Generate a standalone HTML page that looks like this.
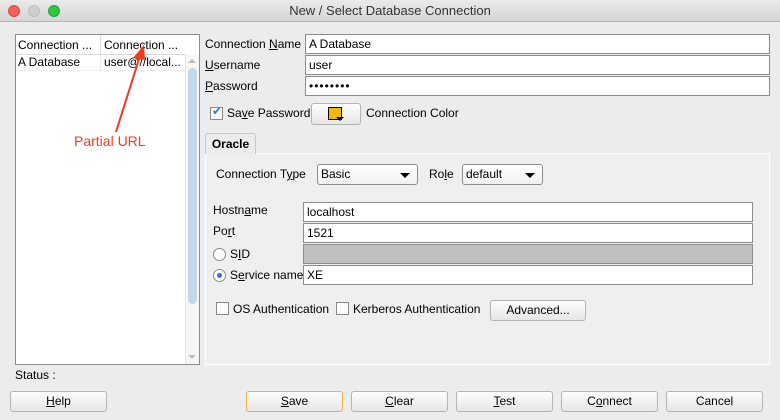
<!DOCTYPE html>
<html><head><style>
*{box-sizing:border-box;margin:0;padding:0}
body{width:780px;height:420px;background:#ececec;font-family:"Liberation Sans",sans-serif;font-size:12px;color:#000;position:relative;overflow:hidden}
.a{position:absolute}
.tb{left:0;top:0;width:780px;height:22px;background:linear-gradient(#ebebeb,#d5d5d5);border-bottom:1px solid #b5b5b5;text-align:center;font-size:13px;line-height:22px;color:#333}
.dot{width:12px;height:12px;border-radius:50%;top:5px}
.f{background:#fff;border:1px solid #8c8c8c;height:20px;padding-left:3px;line-height:18px;font-size:12px}
.btn{height:21px;border:1px solid #b4b4b4;border-radius:3px;background:linear-gradient(#fdfdfd,#e6e6e6);text-align:center;line-height:19px;font-size:12px}
u{text-decoration:underline}
.cb{width:13px;height:13px;border:1px solid #8a8a8a;background:#fff}
.rd{width:13px;height:13px;border:1px solid #8a8a8a;border-radius:50%;background:#fff}
.sel{height:21px;border:1px solid #8c8c8c;border-radius:3px;background:linear-gradient(#fff,#f0f0f0);padding-left:3px;line-height:19px}
.sel:after{content:"";position:absolute;right:7px;top:8px;border-left:5px solid transparent;border-right:5px solid transparent;border-top:5px solid #000}
</style></head><body>
<div class="a tb">New / Select Database Connection</div>
<div class="a dot" style="left:8px;background:#fc5f57;border:1px solid #de4841"></div>
<div class="a dot" style="left:28px;background:#cfcfcf;border:1px solid #bdbdbd"></div>
<div class="a dot" style="left:48px;background:#2bc840;border:1px solid #1fa631"></div>

<div class="a" style="left:15px;top:34px;width:185px;height:331px;background:#fff;border:1px solid #8c8c8c"></div>
<div class="a" style="left:16px;top:35px;width:170px;height:20px;border-bottom:1px solid #ddd;line-height:20px">
<span class="a" style="left:2px">Connection ...</span><span class="a" style="left:84px;top:0;height:20px;border-left:1px solid #ddd;padding-left:3px">Connection ...</span></div>
<div class="a" style="left:16px;top:55px;width:170px;height:16px;border-bottom:1px solid #eee;line-height:15px">
<span class="a" style="left:2px">A Database</span><span class="a" style="left:84px;top:0;height:16px;border-left:1px solid #eee;padding-left:3px">user@//local...</span></div>
<div class="a" style="left:185px;top:55px;width:14px;height:309px;background:#f6f6f6;border-left:1px solid #e4e4e4"></div>
<div class="a" style="left:188px;top:68px;width:9px;height:236px;background:#c4d7ea;border-radius:5px"></div>
<div class="a" style="left:188px;top:59px;border-left:4px solid transparent;border-right:4px solid transparent;border-bottom:4px solid #bbb"></div>
<div class="a" style="left:188px;top:355px;border-left:4px solid transparent;border-right:4px solid transparent;border-top:4px solid #bbb"></div>
<svg class="a" style="left:100px;top:40px" width="60" height="100"><line x1="16" y1="92" x2="40" y2="16" stroke="#f03a1e" stroke-width="2"/><polygon points="44,5 33,18 45,20" fill="#f03a1e"/></svg>
<div class="a" style="left:74px;top:133px;color:#f03a1e;font-size:14px">Partial URL</div>

<div class="a" style="left:205px;top:37px">Connection <u>N</u>ame</div>
<div class="a" style="left:205px;top:58px"><u>U</u>sername</div>
<div class="a" style="left:205px;top:79px"><u>P</u>assword</div>
<div class="a f" style="left:305px;top:34px;width:465px">A Database</div>
<div class="a f" style="left:305px;top:55px;width:465px">user</div>
<div class="a f" style="left:305px;top:76px;width:465px;letter-spacing:1px">••••••••</div>

<div class="a cb" style="left:210px;top:107px"></div>
<div class="a" style="left:212px;top:104px;color:#3b73c7;font-size:12px">✔</div>
<div class="a" style="left:227px;top:106px">Sa<u>v</u>e Password</div>
<div class="a btn" style="left:311px;top:103px;width:50px;height:22px"></div>
<div class="a" style="left:328px;top:107px;width:14px;height:13px;background:#f5b800;border:1px solid #000"></div>
<div class="a" style="left:336px;top:117px;border-left:4px solid transparent;border-right:4px solid transparent;border-top:4px solid #000"></div>
<div class="a" style="left:366px;top:106px">Connection Color</div>

<div class="a" style="left:205px;top:153px;width:565px;height:212px;background:#efefef;border:1px solid #fff"></div>
<div class="a" style="left:205px;top:133px;width:51px;height:21px;background:#ececec;border:1px solid #c6c6c6;border-bottom:none;border-radius:3px 3px 0 0;font-weight:bold;text-align:center;line-height:20px">Oracle</div>

<div class="a" style="left:216px;top:167px">Connection T<u>y</u>pe</div>
<div class="a sel" style="left:317px;top:164px;width:101px">Basic</div>
<div class="a" style="left:429px;top:167px">Ro<u>l</u>e</div>
<div class="a sel" style="left:462px;top:164px;width:81px">default</div>

<div class="a" style="left:213px;top:203px">Hostn<u>a</u>me</div>
<div class="a" style="left:213px;top:224px">Po<u>r</u>t</div>
<div class="a rd" style="left:213px;top:248px"></div>
<div class="a" style="left:230px;top:247px">S<u>I</u>D</div>
<div class="a rd" style="left:213px;top:269px"></div>
<div class="a" style="left:217px;top:273px;width:5px;height:5px;border-radius:50%;background:#3b73c7"></div>
<div class="a" style="left:230px;top:268px">S<u>e</u>rvice name</div>
<div class="a f" style="left:303px;top:202px;width:450px">localhost</div>
<div class="a f" style="left:303px;top:223px;width:450px">1521</div>
<div class="a f" style="left:303px;top:244px;width:450px;background:#c0c0c0"></div>
<div class="a f" style="left:303px;top:265px;width:450px">XE</div>

<div class="a cb" style="left:216px;top:302px"></div>
<div class="a" style="left:233px;top:302px">OS Authentication</div>
<div class="a cb" style="left:336px;top:302px"></div>
<div class="a" style="left:353px;top:302px">Kerberos Authentication</div>
<div class="a btn" style="left:490px;top:300px;width:96px">Advanced...</div>

<div class="a" style="left:15px;top:368px">Status :</div>
<div class="a btn" style="left:10px;top:391px;width:97px"><u>H</u>elp</div>
<div class="a btn" style="left:246px;top:391px;width:97px;border-color:#f0b040"><u>S</u>ave</div>
<div class="a btn" style="left:351px;top:391px;width:97px"><u>C</u>lear</div>
<div class="a btn" style="left:456px;top:391px;width:97px"><u>T</u>est</div>
<div class="a btn" style="left:561px;top:391px;width:97px">C<u>o</u>nnect</div>
<div class="a btn" style="left:666px;top:391px;width:97px">Cancel</div>
</body></html>
